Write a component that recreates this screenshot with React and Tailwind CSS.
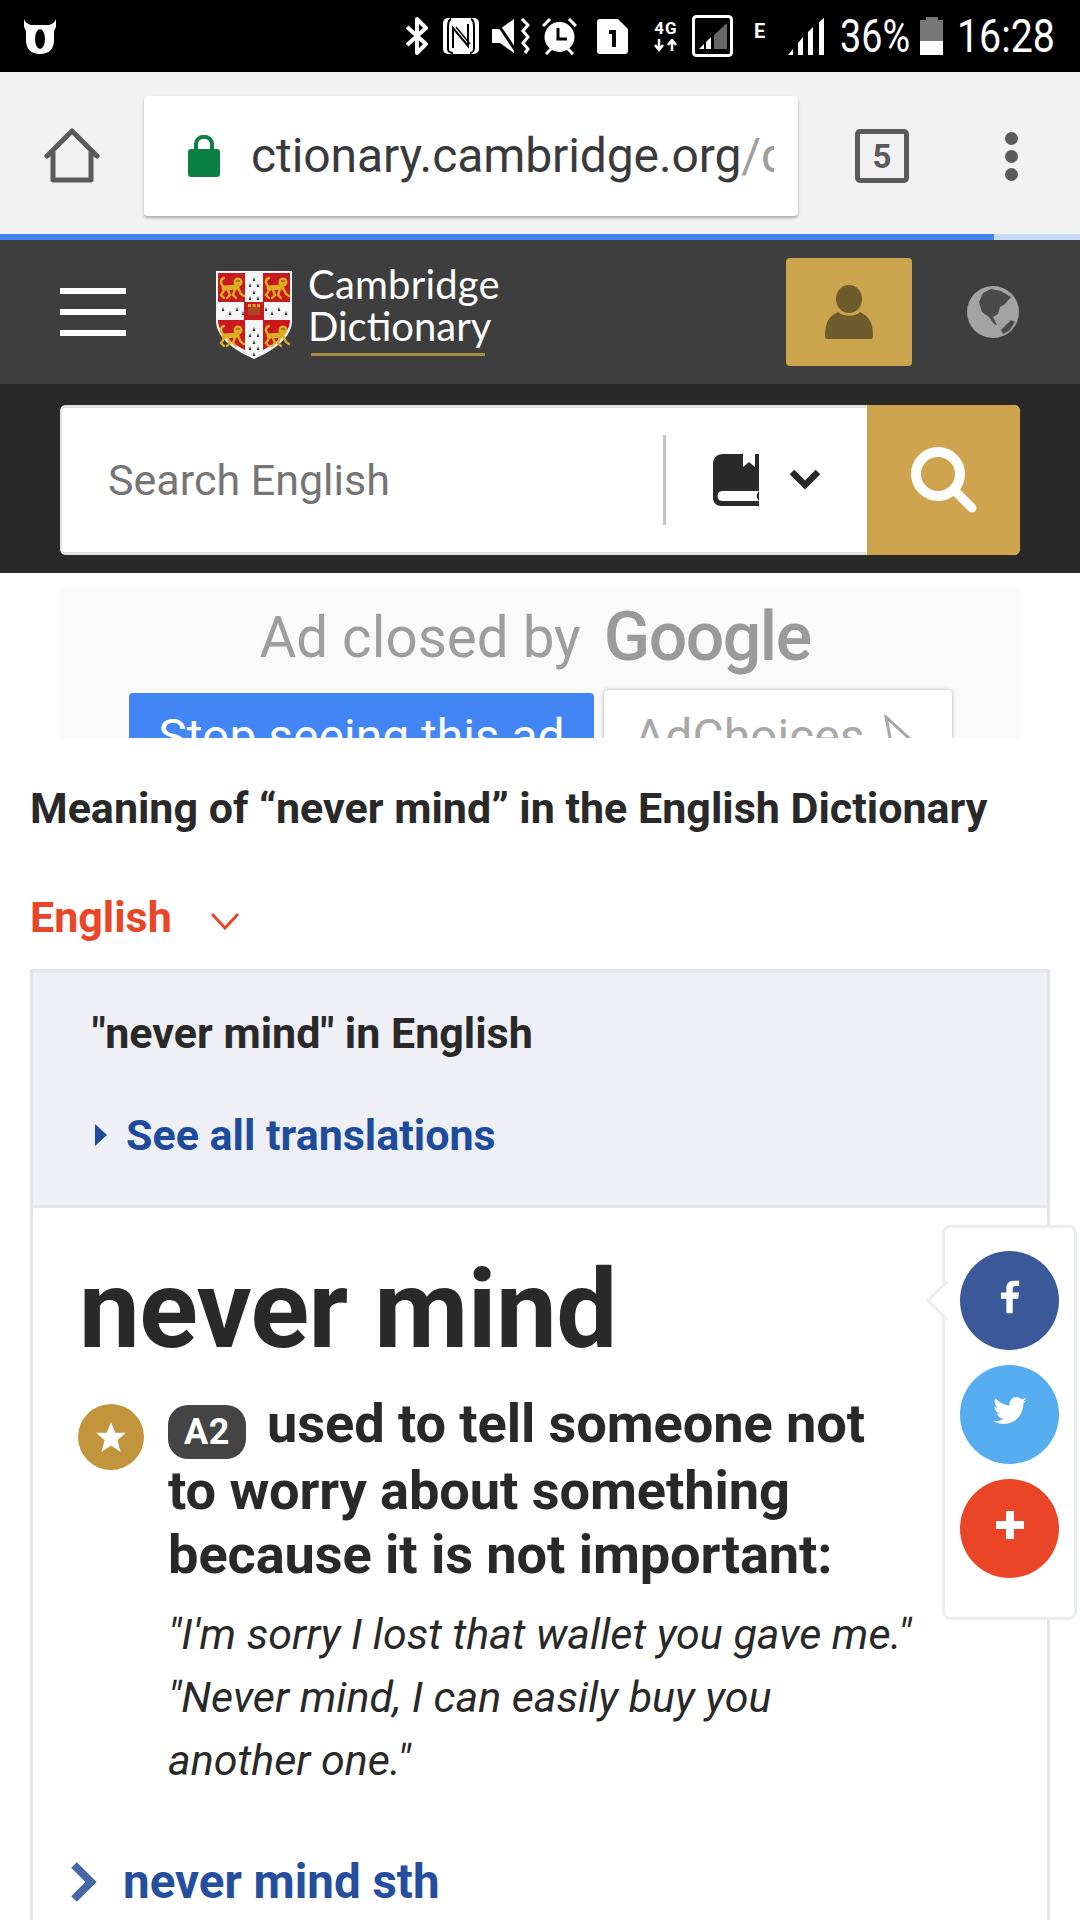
const roboto = { fontFamily: 'Roboto, "Liberation Sans", sans-serif' };

function Lion({ x, y }) {
  return (
    <g transform={`translate(${x} ${y})`}>
      <g stroke="#dcae22" fill="none" strokeWidth="2.4" strokeLinecap="round">
        <path d="M6 12 C2 9 2 4 6 3" />
        <path d="M6 13 L19 12" strokeWidth="5" />
        <path d="M7 14 L3 20 L6 23" />
        <path d="M10 15 L12 20 L9 23" />
        <path d="M17 14 L15 20 L18 23" />
        <path d="M20 13 L23 19 L26 21" />
      </g>
      <circle cx="20" cy="7" r="4.5" fill="#dcae22" />
      <path d="M18 6 H22" stroke="#7a3b12" strokeWidth="1" />
    </g>
  );
}

function Shield() {
  const spots = [
    [38, 8], [34, 14], [42, 14], [38, 21], [34, 27],
    [42, 27], [38, 58], [34, 64], [42, 64], [38, 71], [34, 77], [42, 77], [38, 83],
    [7, 38], [14, 42], [21, 38], [27, 42], [50, 38], [56, 42], [63, 38], [70, 42],
  ];
  return (
    <svg width="76" height="88" viewBox="0 0 76 88" className="shrink-0">
      <path d="M0 0 H76 V50 C76 68 54 81 38 88 C22 81 0 68 0 50 Z" fill="#f6f6f6" />
      <path d="M2 2 H29 V31 H2 Z M47 2 H74 V31 H47 Z" fill="#c9191f" />
      <path d="M2 49 H29 V79 C16 72 2 63 2 49 Z M47 49 H74 C74 63 60 72 47 79 Z" fill="#c9191f" />
      <Lion x={2} y={4} />
      <Lion x={47} y={4} />
      <Lion x={2} y={52} />
      <Lion x={47} y={52} />
      <rect x="28" y="31" width="20" height="18" fill="#c9191f" />
      <rect x="32" y="36" width="12" height="8" fill="#a8481f" />
      <path d="M32 36 V33 H35 V36 M36.500 36 V33 H39.500 V36 M41 36 V33 H44 V36" fill="#dcae22" />
      <g fill="#333">
        {spots.map(([a, b]) => (
          <path key={`${a}-${b}`} d={`M${a} ${b - 2} L${a + 1.300} ${b + 2} H${a - 1.300} Z`} />
        ))}
      </g>
    </svg>
  );
}

function StatusBar() {
  return (
    <div className="h-[72px] bg-black flex items-center pl-[23px] pr-[25px] text-white" style={roboto}>
      <svg width="34" height="36" viewBox="0 0 34 36">
        <path d="M1 1 C2 4 4 6 8 7 H26 C30 6 32 4 33 1 V8 C33 10 31 12 31 14 V22 C31 31 26 36 17 36 C8 36 3 31 3 22 V14 C3 12 1 10 1 8 Z" fill="#fff" />
        <ellipse cx="17" cy="21" rx="5" ry="10" fill="#000" />
      </svg>
      <div className="flex-1" />
      <svg width="23" height="38" viewBox="0 0 23 38" fill="none" stroke="#fff" strokeWidth="4" strokeLinejoin="round">
        <path d="M2 10 L21 27 L12 36 V2 L21 11 L2 28" />
      </svg>
      <svg className="ml-[15px]" width="36" height="36" viewBox="0 0 36 36" fill="none">
        <rect width="36" height="36" rx="5" fill="#fff" />
        <path d="M8 1 C5 2 5 6 5 9 V31 C5 33 7 35 10 35" stroke="#000" strokeWidth="2" />
        <path d="M28 1 C31 2 31 6 31 9 V30 C31 33 29 35 27 35" stroke="#000" strokeWidth="2" />
        <path d="M10 30 V10 L25 28 V6" stroke="#000" strokeWidth="2" />
        <path d="M13 9 L27 26" stroke="#000" strokeWidth="1.500" />
      </svg>
      <svg className="ml-[13px]" width="38" height="36" viewBox="0 0 38 36">
        <path d="M0 11 H8 L22 1 V35 L8 25 H0 Z" fill="#fff" />
        <path d="M3 2 L26 36" stroke="#000" strokeWidth="3" />
        <path d="M30 1 L36 7 L31 13 L36 19 L31 25 L36 31 L33 35" stroke="#fff" strokeWidth="3" fill="none" />
      </svg>
      <svg className="ml-[12px]" width="35" height="38" viewBox="0 0 35 38">
        <circle cx="17.500" cy="20" r="15" fill="#fff" />
        <path d="M16 11 V22 H25" stroke="#000" strokeWidth="3" fill="none" />
        <path d="M1 9 L8 2 M34 9 L27 2 M4 37 L9 32 M31 37 L26 32" stroke="#fff" strokeWidth="3" />
      </svg>
      <svg className="ml-[20px]" width="31" height="35" viewBox="0 0 31 35">
        <path d="M3 0 H21 L31 10 V32 C31 34 30 35 28 35 H3 C1 35 0 34 0 32 V3 C0 1 1 0 3 0Z" fill="#fff" />
        <path d="M12 11 H19 V28 H15 V15 H12Z" fill="#000" />
      </svg>
      <div className="ml-[24px] w-[28px] flex flex-col items-center leading-none">
        <span className="text-[17px] font-bold tracking-[1px] leading-[17px]">4G</span>
        <svg width="26" height="13" viewBox="0 0 26 13" className="mt-[2px]">
          <path d="M6 0 V9 M2 6 L6 11 L10 6 M19 12 V3 M15 6 L19 1 L23 6" stroke="#fff" strokeWidth="2.500" fill="none" />
        </svg>
      </div>
      <svg className="ml-[12px]" width="41" height="42" viewBox="0 0 41 42">
        <rect x="1.500" y="1.500" width="38" height="39" rx="3" fill="#000" stroke="#fff" strokeWidth="3" />
        <path d="M35 8 V34 H22 V20 Z" fill="#666" />
        <path d="M7 34 L12 29 V34 Z M14 34 V27 L19 22 V34 Z" fill="#fff" />
      </svg>
      <span className="ml-[21px] -mt-[10px] w-[10px] text-[20px] font-bold leading-none">E</span>
      <svg className="ml-[24px]" width="36" height="37" viewBox="0 0 36 37" fill="#fff">
        <path d="M0 37 L5 31 V37 Z M10 37 V25 L15 19 V37 Z M20 37 V14 L25 9 V37 Z M31 37 V4 L36 0 V37 Z" />
      </svg>
      <span className="ml-[16px] w-[71px] text-[46px] leading-none whitespace-nowrap origin-left scale-x-[0.82]">36%</span>
      <div className="ml-[9px] w-[23px] h-[38px] flex flex-col">
        <div className="mx-auto w-[12px] h-[3px] bg-[#777]" />
        <div className="h-[21px] bg-[#777]" />
        <div className="flex-1 bg-white" />
      </div>
      <span className="ml-[14px] w-[98px] text-[46px] leading-none whitespace-nowrap origin-left scale-x-[0.855]">16:28</span>
    </div>
  );
}

function Toolbar() {
  return (
    <div className="h-[162px] pt-[6px] bg-[#f2f2f2] flex items-center" style={roboto}>
      <div className="w-[144px] flex justify-center">
        <svg width="56" height="56" viewBox="0 0 56 56" fill="none" stroke="#5a5a5a" strokeWidth="5" strokeLinejoin="round" strokeLinecap="round">
          <path d="M3 28 L28 3 L53 28 M9 24 V52 H47 V24" />
        </svg>
      </div>
      <div className="w-[654px] h-[120px] bg-white rounded-[4px] shadow-[0_2px_3px_rgba(0,0,0,0.3)] flex items-center pl-[44px] pr-[24px]">
        <svg width="32" height="42" viewBox="0 0 32 42" className="shrink-0">
          <path d="M8 18 V10 C8 -1 24 -1 24 10 V18" fill="none" stroke="#0b8043" strokeWidth="4" />
          <rect y="14" width="32" height="28" rx="3" fill="#0b8043" />
        </svg>
        <div className="ml-[31px] overflow-hidden whitespace-nowrap text-[48px] leading-[60px] text-[#3a3a3c] tracking-[-0.1px]">
          ctionary.cambridge.org<span className="text-[#9e9e9e]">/dictionary</span>
        </div>
      </div>
      <div className="w-[168px] flex justify-center">
        <div className="w-[54px] h-[54px] border-[5px] border-[#5a5a5a] rounded-[5px] flex items-center justify-center text-[33px] font-bold text-[#5a5a5a] leading-none">5</div>
      </div>
      <div className="w-[56px] ml-[17px] flex flex-col items-center gap-[5px]">
        <div className="w-[13px] h-[13px] rounded-full bg-[#5a5a5a]" />
        <div className="w-[13px] h-[13px] rounded-full bg-[#5a5a5a]" />
        <div className="w-[13px] h-[13px] rounded-full bg-[#5a5a5a]" />
      </div>
    </div>
  );
}

function Progress() {
  return (
    <div className="h-[6px] bg-[#c6d9f6]">
      <div className="h-full w-[994px] bg-[#4285f4]" />
    </div>
  );
}

function Header() {
  return (
    <div className="h-[144px] bg-[#3e3e3e] flex items-center pl-[60px]">
      <div className="w-[66px] flex flex-col gap-[15px]">
        <div className="h-[6px] bg-white" />
        <div className="h-[6px] bg-white" />
        <div className="h-[6px] bg-white" />
      </div>
      <div className="ml-[90px] mt-[5px] flex items-start">
        <Shield />
        <div className="ml-[16px] -mt-[7px] text-white" style={{ fontFamily: 'Lato, sans-serif' }}>
          <div className="text-[40px] leading-[40px] font-normal tracking-[0.2px]">Cambridge</div>
          <div className="text-[40px] leading-[44px] font-normal">Dictionary</div>
          <div className="mt-[5px] ml-[3px] w-[174px] h-[3px] bg-[#a98a41]" />
        </div>
      </div>
      <div className="ml-auto w-[126px] h-[108px] bg-[#cba54d] rounded-[4px] flex items-center justify-center">
        <svg width="48" height="54" viewBox="0 0 48 54" fill="#6f5c2c">
          <ellipse cx="24" cy="14" rx="13" ry="14" />
          <path d="M2 54 C0 54 0 52 0 50 C0 38 4 31 13 27 C18 32 30 32 35 27 C44 31 48 38 48 50 C48 52 48 54 46 54 Z" />
        </svg>
      </div>
      <div className="ml-[55px] mr-[61px] w-[52px] h-[52px]">
        <svg width="52" height="52" viewBox="0 0 52 52">
          <circle cx="26" cy="26" r="26" fill="#a3a3a3" />
          <path d="M16 7 L24 3 L34 5 L44 11 L38 18 L33 21 L31 28 L26 31 L30 39 L27 38 L22 31 L15 26 L12 16 Z M34 44 L44 34 L48 36 L42 45 L36 48 Z" fill="#4a4a4a" />
        </svg>
      </div>
    </div>
  );
}

function SearchBand() {
  return (
    <div className="h-[189px] bg-[#292929] pt-[21px] px-[60px]" style={roboto}>
      <div className="h-[150px] flex rounded-[6px] overflow-hidden bg-white">
        <div className="flex-1 flex items-center border-2 border-r-0 border-t-[3px] border-b-[3px] border-[#e0e0e0] rounded-l-[6px] pl-[46px]">
          <span className="text-[43px] text-[#757575] leading-none">Search English</span>
          <div className="ml-auto w-[3px] h-[90px] bg-[#c4c4c4]" />
          <div className="w-[201px] flex items-center pl-[47px]">
            <svg width="46" height="52" viewBox="0 0 46 52">
              <path d="M10 0 H46 V52 H8 C3 52 0 48 0 44 V10 C0 4 4 0 10 0 Z" fill="#292929" />
              <path d="M30 0 H42 V13 L36 8 L30 13 Z" fill="#fff" />
              <path d="M46 37 H9 C3 37 3 47 9 47 H46 C43 44 43 40 46 37 Z" fill="#fff" />
            </svg>
            <svg className="ml-[30px]" width="32" height="22" viewBox="0 0 32 22" fill="none" stroke="#292929" strokeWidth="6.500">
              <path d="M3 3 L16 16 L29 3" />
            </svg>
          </div>
        </div>
        <div className="w-[153px] bg-[#cfa44e] flex items-center justify-center">
          <svg width="66" height="66" viewBox="0 0 66 66" fill="none" stroke="#fff" strokeLinecap="round">
            <circle cx="27" cy="27" r="22" strokeWidth="10" />
            <path d="M43 43 L61 61" strokeWidth="9" />
          </svg>
        </div>
      </div>
    </div>
  );
}

function Ad() {
  return (
    <div className="mt-[15px] mx-[60px] h-[150px] bg-[#fafafa] overflow-hidden" style={roboto}>
      <div className="h-[102px] flex items-center justify-center pb-[1px] pr-[10px] text-[#9e9e9e]">
        <span className="text-[56.5px] leading-none">Ad closed by</span>
        <span className="ml-[23px] text-[68px] leading-none font-medium text-[#9a9a9a] tracking-[-1.5px] -mt-[4px]">Google</span>
      </div>
      <div className="flex items-start pl-[69px] gap-[10px]">
        <div className="mt-[3px] w-[465px] h-[80px] bg-[#4285f4] rounded-[4px] text-white text-[48px] leading-none pt-[20px] text-center">Stop seeing this ad</div>
        <div className="w-[348px] h-[80px] bg-white rounded-[4px] shadow-[0_0_4px_rgba(0,0,0,0.3)] text-[#a8a8a8] text-[48px] leading-none pt-[23px] pl-[30px] flex items-start">
          AdChoices
          <svg className="ml-[14px] mt-[2px]" width="36" height="36" viewBox="0 0 36 36" fill="none" stroke="#a8a8a8" strokeWidth="3">
            <path d="M8 2 L34 26 L14 33 Z" />
          </svg>
        </div>
      </div>
    </div>
  );
}

function Entry() {
  return (
    <div className="relative mx-[30px] border-x-[3px] border-t-[3px] border-[#e5e6ea] h-[951px] bg-white">
      <div className="h-[236px] bg-[#eff0f5] border-b-[3px] border-[#e5e6ea] pl-[59px] pt-[36px]">
        <div className="text-[43px] leading-[50px] font-bold text-[#292929]">"never mind" in English</div>
        <div className="mt-[52px] flex items-center">
          <svg width="14" height="24" viewBox="0 0 14 24" className="ml-[2px]"><path d="M1 1 L13 12 L1 23 Z" fill="#1d4b9c" /></svg>
          <span className="ml-[18px] text-[43px] leading-[50px] font-bold text-[#1d4c9c]">See all translations</span>
        </div>
      </div>
      <div className="pl-[46px] pr-[80px] pt-[42px]">
        <div className="text-[108.5px] leading-[120px] font-bold text-[#292929] tracking-[-0.5px]">never mind</div>
        <div className="mt-[22px] flex">
          <div className="mt-[12px] -ml-[1px] w-[66px] h-[66px] rounded-full bg-[#c2953d] flex items-center justify-center shrink-0">
            <svg width="32" height="32" viewBox="0 0 30 30"><path d="M15 1 L19 11 L29 11 L21 18 L24 29 L15 23 L6 29 L9 18 L1 11 L11 11 Z" fill="#fff" /></svg>
          </div>
          <div className="ml-[24px]">
            <div className="text-[54.2px] leading-[64px] font-bold text-[#292929] tracking-[-0.1px] whitespace-nowrap">
              <span className="inline-flex align-[-2px] items-center justify-center w-[78px] h-[54px] rounded-[20px] bg-[#444444] text-white text-[36px] leading-none mr-[21px] font-bold tracking-[0.5px]">A2</span>
              used to tell someone not<br />to worry about something<br />because it is not important:
            </div>
            <div className="mt-[16px] text-[43px] leading-[63px] italic text-[#292929] whitespace-nowrap">
              "I'm sorry I lost that wallet you gave me."<br />"Never mind, I can easily buy you<br />another one."
            </div>
          </div>
        </div>
        <div className="mt-[60px] flex items-center -ml-[10px]">
          <svg width="28" height="40" viewBox="0 0 28 40" fill="none" stroke="#4668a8" strokeWidth="8"><path d="M5 3 L22 20 L5 37" /></svg>
          <span className="ml-[26px] text-[47.5px] leading-[60px] font-bold text-[#254f9e]">never mind sth</span>
        </div>
      </div>
      <div className="absolute left-[909px] top-[253px] w-[135px] h-[395px] bg-white border-[3px] border-[#ecedf1] rounded-[8px]">
        <div className="absolute -left-[13px] top-[58px] w-[29px] h-[29px] bg-white border-l-[3px] border-b-[3px] border-[#ecedf1] rotate-45" />
        <div className="relative mt-[23px] ml-[15px] flex flex-col gap-[15px]">
          <div className="w-[99px] h-[99px] pb-[8px] rounded-full bg-[#3b5998] flex items-center justify-center">
            <svg width="20" height="36" viewBox="0 0 22 36"><path d="M7 36 V20 H1 V13 H7 V8 C7 3 10 0 15 0 H21 V6 H17 C15 6 14 7 14 9 V13 H21 L20 20 H14 V36 Z" fill="#fff" /></svg>
          </div>
          <div className="w-[99px] h-[99px] pb-[8px] rounded-full bg-[#55acee] flex items-center justify-center">
            <svg width="34" height="28" viewBox="0 0 24 20"><path d="M24 2.400c-.9.400-1.800.700-2.800.800 1-.600 1.800-1.600 2.200-2.700-1 .600-2 1-3.100 1.200C19.300.700 18 0 16.600 0c-2.700 0-4.900 2.200-4.900 4.900 0 .400 0 .800.100 1.100C7.700 5.800 4.100 3.900 1.700.900c-.400.700-.700 1.600-.700 2.500 0 1.700.900 3.200 2.200 4.100-.800 0-1.600-.200-2.200-.600v.100c0 2.400 1.700 4.400 3.900 4.800-.400.100-.800.200-1.300.200-.300 0-.600 0-.900-.100.600 2 2.400 3.400 4.600 3.400-1.700 1.300-3.800 2.100-6.100 2.100-.400 0-.800 0-1.200-.100C2.200 18.300 4.800 19.200 7.500 19.200c9.100 0 14-7.500 14-14v-.600c1-.700 1.800-1.600 2.500-2.200z" fill="#fff" /></svg>
          </div>
          <div className="w-[99px] h-[99px] pb-[8px] rounded-full bg-[#ea4527] flex items-center justify-center">
            <svg width="30" height="30" viewBox="0 0 30 30"><path d="M11 1 H19 V11 H29 V19 H19 V29 H11 V19 H1 V11 H11 Z" fill="#fff" /></svg>
          </div>
        </div>
      </div>
    </div>
  );
}

export default function App() {
  return (
    <div className="w-[1080px] h-[1920px] overflow-hidden bg-white" style={roboto}>
      <StatusBar />
      <Toolbar />
      <Progress />
      <Header />
      <SearchBand />
      <Ad />
      <div className="h-[231px] px-[30px]">
        <div className="pt-[45px] text-[43px] leading-[50px] font-bold text-[#292929] whitespace-nowrap">Meaning of “never mind” in the English Dictionary</div>
        <div className="mt-[59px] flex items-center">
          <span className="text-[43px] leading-[50px] font-bold text-[#ea4527]">English</span>
          <svg className="ml-[38px] mt-[8px]" width="30" height="18" viewBox="0 0 30 18" fill="none" stroke="#ea4527" strokeWidth="3"><path d="M2 2 L15 16 L28 2" /></svg>
        </div>
      </div>
      <Entry />
    </div>
  );
}
